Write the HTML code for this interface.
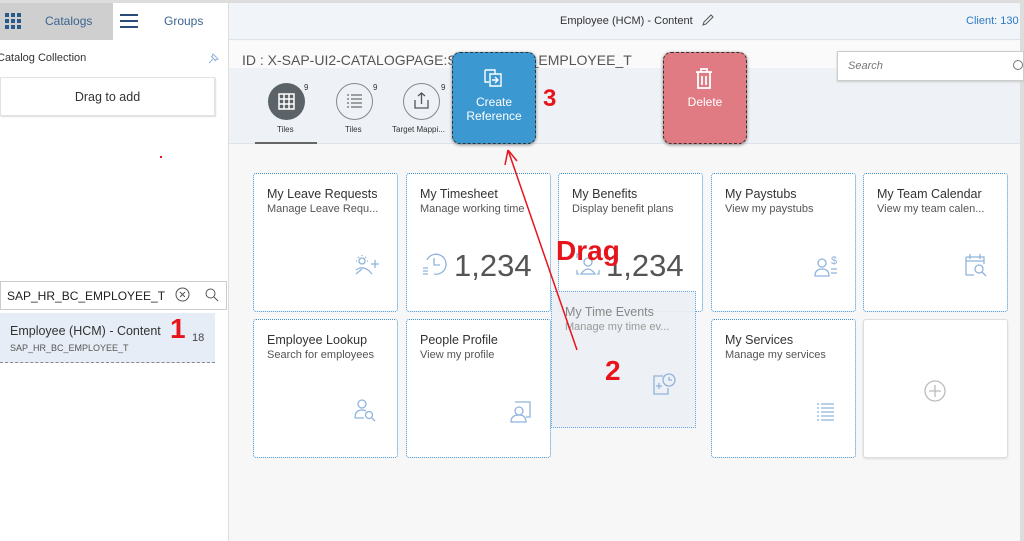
<!DOCTYPE html>
<html><head><meta charset="utf-8"><style>
*{box-sizing:border-box;margin:0;padding:0}
body{width:1024px;height:541px;overflow:hidden;background:#fff;font-family:"Liberation Sans",Arial,sans-serif;position:relative;color:#333}
.abs{position:absolute}
.tile{position:absolute;width:145px;height:139px;background:#fff;border:1px dotted #3a8fd0;border-radius:3px;padding:13px 0 0 13px}
.tile .t{font-size:12.5px;color:#333;white-space:nowrap}
.tile .s{font-size:11px;color:#555;margin-top:2px;white-space:nowrap}
.ic{position:absolute;stroke:#8fb4dc;fill:none;stroke-width:1.3}
.red{color:#e8141c;font-weight:bold;position:absolute}
</style></head><body>
<div class="abs" style="left:0;top:0;width:1024px;height:3px;background:#ddd"></div>
<div class="abs" style="left:0;top:3px;width:113px;height:37px;background:#cfcfcf"></div>
<svg class="abs" style="left:5px;top:13px" width="16" height="16"><g fill="#2a5a8c"><rect x="0" y="0" width="4" height="4"/><rect x="6" y="0" width="4" height="4"/><rect x="12" y="0" width="4" height="4"/><rect x="0" y="6" width="4" height="4"/><rect x="6" y="6" width="4" height="4"/><rect x="12" y="6" width="4" height="4"/><rect x="0" y="12" width="4" height="4"/><rect x="6" y="12" width="4" height="4"/><rect x="12" y="12" width="4" height="4"/></g></svg>
<div class="abs" style="left:45px;top:14px;font-size:12px;color:#3c6490">Catalogs</div>
<svg class="abs" style="left:120px;top:13px" width="18" height="16"><g stroke="#2a4c78" stroke-width="2"><line x1="0" y1="2" x2="18" y2="2"/><line x1="0" y1="8" x2="18" y2="8"/><line x1="0" y1="14" x2="18" y2="14"/></g></svg>
<div class="abs" style="left:164px;top:14px;font-size:12px;color:#3c6490">Groups</div>
<div class="abs" style="left:-3px;top:52px;font-size:11px;color:#333">Catalog Collection</div>
<svg class="abs" style="left:206px;top:51px" width="15" height="15"><path d="M3 12 L7 8 M5 5 L10 10 M7 3 L12 8 L9 9 L6 6 Z" stroke="#8fb4dc" fill="none"/></svg>
<div class="abs" style="left:0;top:77px;width:215px;height:39px;background:#fff;border:1px solid #e2e2e2;box-shadow:1px 1px 1px #ddd;text-align:center;line-height:38px;font-size:12.5px;color:#333">Drag to add</div>
<div class="abs" style="left:160px;top:156px;width:2px;height:2px;background:#e8141c"></div>
<div class="abs" style="left:0;top:281px;width:227px;height:29px;border:1px solid #ccc;background:#fff"></div>
<div class="abs" style="left:7px;top:289px;font-size:12px;color:#222">SAP_HR_BC_EMPLOYEE_T</div>
<svg class="abs" style="left:175px;top:287px" width="15" height="15"><circle cx="7.5" cy="7.5" r="6.5" stroke="#555" fill="none"/><path d="M5 5 L10 10 M10 5 L5 10" stroke="#555"/></svg>
<svg class="abs" style="left:205px;top:288px" width="14" height="14"><circle cx="5.5" cy="5.5" r="4.5" stroke="#555" fill="none"/><path d="M9 9 L13 13" stroke="#555"/></svg>
<div class="abs" style="left:0;top:313px;width:215px;height:50px;background:#e6edf6;border-bottom:1px dashed #888"></div>
<div class="abs" style="left:10px;top:324px;font-size:12.5px;color:#333">Employee (HCM) - Content</div>
<div class="abs" style="left:10px;top:343px;font-size:9px;color:#555">SAP_HR_BC_EMPLOYEE_T</div>
<div class="abs" style="left:192px;top:332px;font-size:11px;color:#444">18</div>
<div class="red" style="left:170px;top:313px;font-size:28px">1</div>
<div class="abs" style="left:228px;top:3px;width:1px;height:538px;background:#ddd"></div>
<div class="abs" style="left:229px;top:3px;width:791px;height:538px;background:#f7f7f7"></div>
<div class="abs" style="left:1020px;top:0;width:4px;height:541px;background:#ddd"></div>
<div class="abs" style="left:229px;top:3px;width:791px;height:37px;background:#f1f4f8;border-bottom:1px solid #dde3ea"></div>
<div class="abs" style="left:560px;top:15px;font-size:11px;color:#333">Employee (HCM) - Content</div>
<svg class="abs" style="left:702px;top:14px" width="12" height="12"><path d="M1 11 L2 8 L9 1 L11 3 L4 10 Z" stroke="#555" fill="none"/></svg>
<div class="abs" style="left:966px;top:15px;font-size:11px;color:#2a7bc6">Client: 130</div>
<div class="abs" style="left:229px;top:41px;width:791px;height:27px;background:#fafafa"></div>
<div class="abs" style="left:242px;top:52px;font-size:14px;color:#555">ID : X-SAP-UI2-CATALOGPAGE:SAP_HR_BC_EMPLOYEE_T</div>
<div class="abs" style="left:229px;top:68px;width:791px;height:76px;background:#eef2f6;border-bottom:1px solid #dde3ea"></div>
<div class="abs" style="left:837px;top:51px;width:187px;height:30px;background:#fff;border:1px solid #ccc;box-shadow:0 1px 2px #ccc"></div>
<div class="abs" style="left:848px;top:60px;font-size:11px;font-style:italic;color:#777">Search</div>
<svg class="abs" style="left:1012px;top:59px" width="12" height="12"><circle cx="6" cy="6" r="4.5" stroke="#777" fill="none"/></svg>
<div class="abs" style="left:268px;top:83px;width:37px;height:37px;border-radius:50%;background:#5b6268"></div>
<svg class="abs" style="left:278px;top:93px" width="17" height="17"><g stroke="#fff" stroke-width="1.5" fill="none"><rect x="1" y="1" width="15" height="15"/><line x1="6" y1="1" x2="6" y2="16"/><line x1="11" y1="1" x2="11" y2="16"/><line x1="1" y1="6" x2="16" y2="6"/><line x1="1" y1="11" x2="16" y2="11"/></g></svg>
<div class="abs" style="left:304px;top:83px;font-size:8px">9</div>
<div class="abs" style="left:277px;top:125px;font-size:8px">Tiles</div>
<div class="abs" style="left:255px;top:142px;width:62px;height:2px;background:#666"></div>
<div class="abs" style="left:336px;top:83px;width:37px;height:37px;border-radius:50%;border:1px solid #888"></div>
<svg class="abs" style="left:346px;top:93px" width="17" height="17"><g stroke="#666" stroke-width="1.2"><line x1="1" y1="2" x2="3" y2="2"/><line x1="5" y1="2" x2="16" y2="2"/><line x1="1" y1="6" x2="3" y2="6"/><line x1="5" y1="6" x2="16" y2="6"/><line x1="1" y1="10" x2="3" y2="10"/><line x1="5" y1="10" x2="16" y2="10"/><line x1="1" y1="14" x2="3" y2="14"/><line x1="5" y1="14" x2="16" y2="14"/></g></svg>
<div class="abs" style="left:373px;top:83px;font-size:8px">9</div>
<div class="abs" style="left:345px;top:125px;font-size:8px">Tiles</div>
<div class="abs" style="left:403px;top:83px;width:37px;height:37px;border-radius:50%;border:1px solid #888"></div>
<svg class="abs" style="left:412px;top:91px" width="19" height="19"><path d="M3 9 V17 H16 V9 M9.5 2 V13 M6 5 L9.5 2 L13 5" stroke="#555" fill="none" stroke-width="1.3"/></svg>
<div class="abs" style="left:441px;top:83px;font-size:8px">9</div>
<div class="abs" style="left:392px;top:125px;font-size:8px">Target Mappi...</div>
<div class="abs" style="left:452px;top:52px;width:84px;height:92px;background:#3c98d0;border:1px dashed #333;border-radius:8px;box-shadow:0 1px 3px #888"></div>
<svg class="abs" style="left:483px;top:68px" width="20" height="20"><path d="M2 2 H12 V6 M2 2 V14 H6 M7 6 H18 V18 H7 Z M9 12 H15 M12 9 L15 12 L12 15" stroke="#fff" fill="none" stroke-width="1.4"/></svg>
<div class="abs" style="left:452px;top:95px;width:84px;text-align:center;color:#fff;font-size:12px;line-height:14px">Create<br>Reference</div>
<div class="red" style="left:543px;top:85px;font-size:24px">3</div>
<div class="abs" style="left:663px;top:52px;width:84px;height:92px;background:#e07b84;border:1px dashed #333;border-radius:8px;box-shadow:0 1px 3px #888"></div>
<svg class="abs" style="left:695px;top:68px" width="18" height="22"><path d="M1 4 H17 M6 4 V1 H12 V4 M3 4 V20 H15 V4 M7 8 V17 M11 8 V17" stroke="#fff" fill="none" stroke-width="1.8"/></svg>
<div class="abs" style="left:663px;top:95px;width:84px;text-align:center;color:#fff;font-size:12px">Delete</div>
<div class="tile" style="left:253px;top:173px"><div class="t">My Leave Requests</div><div class="s">Manage Leave Requ...</div>
<svg class="ic" style="left:100px;top:80px" width="26" height="26"><circle cx="8" cy="7" r="3"/><path d="M8 1V2M3 7H2M14 7H13M4 3L5 4M12 3L11 4M2 16 Q10 10 18 20 M2 20 L8 15 M17 10H25M21 6V14"/></svg></div>
<div class="tile" style="left:406px;top:173px"><div class="t">My Timesheet</div><div class="s">Manage working time</div>
<svg class="ic" style="left:14px;top:78px" width="26" height="26"><path d="M6 8 A10 10 0 1 1 13 22 M13 6 V13 H19 M2 16H7 M2 19H7 M2 22H7"/></svg>
<div class="abs" style="left:47px;top:74px;font-size:31px;color:#555">1,234</div></div>
<div class="tile" style="left:558px;top:173px"><div class="t">My Benefits</div><div class="s">Display benefit plans</div>
<svg class="ic" style="left:16px;top:78px" width="26" height="26"><circle cx="13" cy="10" r="4"/><path d="M6 22 Q13 12 20 22 Z M2 6 V2 H6 M20 2H24V6 M2 18V22H4 M24 18V22H22"/></svg>
<div class="abs" style="left:47px;top:74px;font-size:31px;color:#555">1,234</div></div>
<div class="tile" style="left:711px;top:173px"><div class="t">My Paystubs</div><div class="s">View my paystubs</div>
<svg class="ic" style="left:102px;top:80px" width="26" height="26"><circle cx="8" cy="9" r="4"/><path d="M1 22 Q1 15 8 15 Q15 15 15 22 Z M17 15H23 M17 19H23"/><text x="17" y="10" font-size="11" fill="#8fb4dc" stroke="none" font-family="Liberation Sans">$</text></svg></div>
<div class="tile" style="left:863px;top:173px"><div class="t">My Team Calendar</div><div class="s">View my team calen...</div>
<svg class="ic" style="left:100px;top:79px" width="26" height="26"><path d="M2 4 H20 V11 M2 4 V22 H10 M6 1V6 M16 1V6 M2 8H20"/><circle cx="15" cy="16" r="4"/><path d="M18 19 L22 23"/></svg></div>
<div class="tile" style="left:253px;top:319px"><div class="t">Employee Lookup</div><div class="s">Search for employees</div>
<svg class="ic" style="left:100px;top:78px" width="26" height="26"><circle cx="8" cy="6" r="4"/><path d="M1 20 Q1 12 8 12 Q11 12 12 13 M1 20 H10"/><circle cx="15" cy="17" r="3.5"/><path d="M18 20L21 23"/></svg></div>
<div class="tile" style="left:406px;top:319px"><div class="t">People Profile</div><div class="s">View my profile</div>
<svg class="ic" style="left:102px;top:80px" width="26" height="26"><path d="M6 2 H21 V17 H17"/><circle cx="10" cy="11" r="4"/><path d="M2 22 Q2 15 10 15 Q17 15 17 22 Z"/></svg></div>
<div class="tile" style="left:711px;top:319px"><div class="t">My Services</div><div class="s">Manage my services</div>
<svg class="ic" style="left:104px;top:82px" width="20" height="20"><path d="M1 2H3M5 2H18M1 6H3M5 6H18M1 10H3M5 10H18M1 14H3M5 14H18M1 18H3M5 18H18"/></svg></div>
<div class="abs" style="left:863px;top:319px;width:145px;height:139px;background:#fff;border:1px solid #ddd;border-radius:3px;box-shadow:0 1px 2px #ddd"></div>
<svg class="abs" style="left:924px;top:380px" width="22" height="22"><circle cx="11" cy="11" r="10" stroke="#bbb" fill="none" stroke-width="1.3"/><path d="M11 5V17M5 11H17" stroke="#bbb" stroke-width="1.3"/></svg>
<div class="abs" style="left:551px;top:291px;width:145px;height:137px;background:rgba(236,239,243,0.92);border:1px dotted #6aa6d8;padding:13px 0 0 13px">
<div style="font-size:12.5px;color:#888">My Time Events</div><div style="font-size:11px;color:#999;margin-top:2px">Manage my time ev...</div></div>
<svg class="ic" style="left:652px;top:372px" width="26" height="26"><path d="M11 4H2V22H16V16 M4 14H10M7 11V17"/><circle cx="17" cy="8" r="6"/><path d="M17 5V8H20"/></svg>
<div class="red" style="left:605px;top:355px;font-size:28px">2</div>
<div class="red" style="left:556px;top:235px;font-size:28px">Drag</div>
<svg class="abs" style="left:0;top:0" width="1024" height="541"><path d="M577 350 L508 150 M508 150 L505 165 M508 150 L517 161" stroke="#e8141c" stroke-width="1.5" fill="none"/></svg>
</body></html>
